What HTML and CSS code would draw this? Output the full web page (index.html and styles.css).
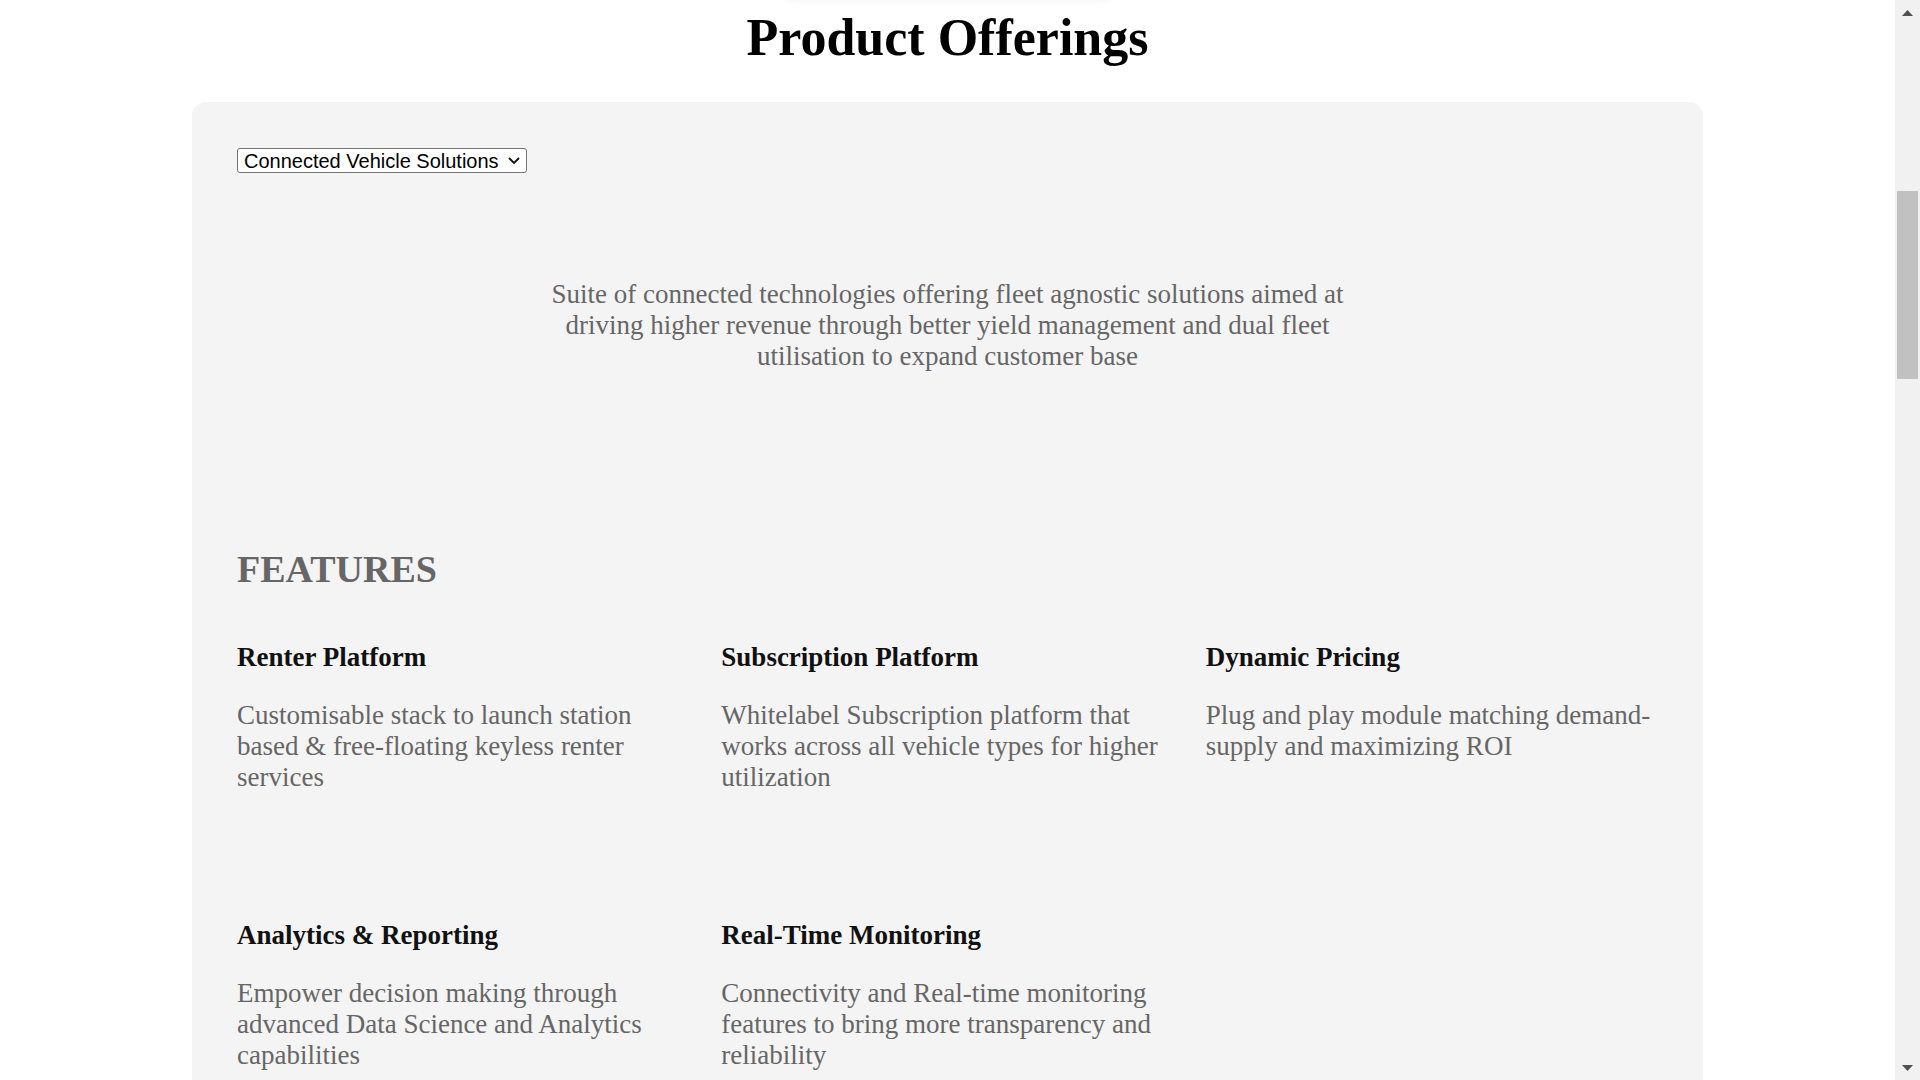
FILE: index.html
```html
<!DOCTYPE html>
<html lang="en">
<head>
<meta charset="utf-8">
<title>Product Offerings</title>
<link rel="stylesheet" href="styles.css">
</head>
<body>
<div class="viewport">
  <main class="page">
    <div class="hero-tail"></div>
    <h2 class="title">Product Offerings</h2>
    <section class="card">
      <div class="toolbar">
        <div class="select-wrap">
          <select class="category">
            <option>Connected Vehicle Solutions</option>
            <option>Fleet Management</option>
            <option>Mobility Platform</option>
          </select>
          <svg class="chevron" viewBox="0 0 12 7" aria-hidden="true"><polyline points="1,1 6,6 11,1"/></svg>
        </div>
      </div>
      <p class="summary">Suite of connected technologies offering fleet agnostic solutions aimed at driving higher revenue through better yield management and dual fleet utilisation to expand customer base</p>
      <h3 class="features-title">FEATURES</h3>
      <div class="features">
        <article class="feature">
          <h4>Renter Platform</h4>
          <p>Customisable stack to launch station based &amp; free-floating keyless renter services</p>
        </article>
        <article class="feature">
          <h4>Subscription Platform</h4>
          <p>Whitelabel Subscription platform that works across all vehicle types for higher utilization</p>
        </article>
        <article class="feature">
          <h4>Dynamic Pricing</h4>
          <p>Plug and play module matching demand-supply and maximizing ROI</p>
        </article>
        <article class="feature">
          <h4>Analytics &amp; Reporting</h4>
          <p>Empower decision making through advanced Data Science and Analytics capabilities</p>
        </article>
        <article class="feature">
          <h4>Real-Time Monitoring</h4>
          <p>Connectivity and Real-time monitoring features to bring more transparency and reliability</p>
        </article>
      </div>
    </section>
  </main>
  <div class="scrollbar" aria-hidden="true">
    <div class="sb-btn"><svg viewBox="0 0 11 6"><polygon points="5.5,0 11,6 0,6"/></svg></div>
    <div class="sb-track"><div class="sb-thumb"></div></div>
    <div class="sb-btn"><svg viewBox="0 0 11 6"><polygon points="0,0 11,0 5.5,6"/></svg></div>
  </div>
</div>
</body>
</html>
```

FILE: styles.css
```css
html, body {
  margin: 0;
  height: 100%;
  overflow: hidden;
  background: #ffffff;
}

body {
  font-family: "Liberation Serif", "Times New Roman", serif;
}

.viewport {
  display: flex;
  height: 100vh;
}

.page {
  flex: 1;
  min-width: 0;
  overflow: hidden;
}

.hero-tail {
  width: 332px;
  height: 40px;
  margin: -44px auto 0;
  background: #ffffff;
  border-radius: 12px;
  box-shadow: 0 3px 10px rgba(0, 0, 0, 0.07);
}

.title {
  margin: 11.5px 0 34.5px;
  font-size: 52px;
  line-height: 60px;
  font-weight: 700;
  text-align: center;
  color: #000000;
}

.card {
  margin: 0 192px;
  padding: 46px 45px 80px;
  background: #f4f4f4;
  border-radius: 14px;
}

.toolbar {
  display: flex;
}

.select-wrap {
  position: relative;
  display: flex;
}

.category {
  -webkit-appearance: none;
  appearance: none;
  margin: 0;
  height: 25px;
  padding: 0 27px 0 6px;
  font-family: "Liberation Sans", Arial, sans-serif;
  font-size: 20px;
  color: #000000;
  background: #ffffff;
  border: 1px solid #767676;
  border-radius: 3px;
}

.chevron {
  position: absolute;
  right: 7px;
  top: 9px;
  width: 12px;
  height: 7px;
  fill: none;
  stroke: #111111;
  stroke-width: 1.8;
  pointer-events: none;
}

.summary {
  max-width: 852px;
  margin: 106px auto 0;
  font-size: 27px;
  line-height: 31px;
  color: #666666;
  text-align: center;
}

.features-title {
  margin: 176px 0 0;
  font-size: 38px;
  line-height: 43px;
  font-weight: 700;
  color: #666666;
}

.features {
  display: grid;
  grid-template-columns: repeat(3, 1fr);
  column-gap: 32px;
  row-gap: 127px;
  margin-top: 51px;
}

.feature h4 {
  margin: 0;
  font-size: 27px;
  line-height: 31px;
  font-weight: 700;
  color: #111111;
}

.feature p {
  margin: 27px 0 0;
  font-size: 27px;
  line-height: 31px;
  color: #666666;
}

.scrollbar {
  flex: 0 0 25px;
  display: flex;
  flex-direction: column;
  background: #f1f1f1;
}

.sb-btn {
  height: 25px;
  display: flex;
  align-items: center;
  justify-content: center;
}

.sb-btn svg {
  width: 11px;
  height: 6px;
  fill: #505050;
}

.sb-track {
  flex: 1;
  padding: 166px 2px 0;
}

.sb-thumb {
  height: 188px;
  background: #c1c1c1;
}
```
